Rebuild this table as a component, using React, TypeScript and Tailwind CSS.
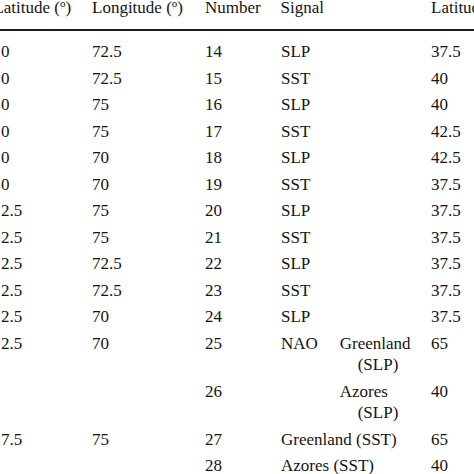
import React from "react";

type Row = {
  lat: string;
  lon: string;
  num: string;
  signal: React.ReactNode;
  lat2: string;
};

const Sub = ({ lead, text }: { lead?: string; text: string }) => (
  <div className="flex">
    <div className="w-[58.7px] shrink-0 whitespace-nowrap">{lead}</div>
    <div className="w-[80px] shrink-0 pl-[18px] indent-[-18px] whitespace-normal">{text}</div>
  </div>
);

const rows: Row[] = [
  { lat: "0", lon: "72.5", num: "14", signal: "SLP", lat2: "37.5" },
  { lat: "0", lon: "72.5", num: "15", signal: "SST", lat2: "40" },
  { lat: "0", lon: "75", num: "16", signal: "SLP", lat2: "40" },
  { lat: "0", lon: "75", num: "17", signal: "SST", lat2: "42.5" },
  { lat: "0", lon: "70", num: "18", signal: "SLP", lat2: "42.5" },
  { lat: "0", lon: "70", num: "19", signal: "SST", lat2: "37.5" },
  { lat: "2.5", lon: "75", num: "20", signal: "SLP", lat2: "37.5" },
  { lat: "2.5", lon: "75", num: "21", signal: "SST", lat2: "37.5" },
  { lat: "2.5", lon: "72.5", num: "22", signal: "SLP", lat2: "37.5" },
  { lat: "2.5", lon: "72.5", num: "23", signal: "SST", lat2: "37.5" },
  { lat: "2.5", lon: "70", num: "24", signal: "SLP", lat2: "37.5" },
  { lat: "2.5", lon: "70", num: "25", signal: <Sub lead="NAO" text="Greenland (SLP)" />, lat2: "65" },
  { lat: "", lon: "", num: "26", signal: <Sub text="Azores (SLP)" />, lat2: "40" },
  { lat: "7.5", lon: "75", num: "27", signal: "Greenland (SST)", lat2: "65" },
  { lat: "", lon: "", num: "28", signal: "Azores (SST)", lat2: "40" },
];

const Deg = () => (
  <>
    (<span className="relative top-[-6px] text-[11px]">o</span>)
  </>
);

export default function App() {
  return (
    <div className="w-[474px] h-[474px] overflow-hidden bg-white text-[#141414] font-['Liberation_Serif','Times_New_Roman',serif] text-[17px] leading-[21.5px]">
      <div className="mt-[-6px] w-[620px]">
        <div className="flex py-[2.5px] whitespace-nowrap">
          <div className="w-[92px] shrink-0">
            <span className="ml-[-6.6px]">
              Latitude <Deg />
            </span>
          </div>
          <div className="w-[113px] shrink-0">
            Longitude <Deg />
          </div>
          <div className="w-[75.5px] shrink-0">Number</div>
          <div className="w-[150.5px] shrink-0">Signal</div>
          <div className="shrink-0">
            Latitude <Deg />
          </div>
        </div>
        <div className="mt-[6px] h-[2.5px] bg-[#1c1c1c] w-[474px]" />
        <div className="mt-[7.5px]">
          {rows.map((r) => (
            <div key={r.num} className="flex py-[2.5px]">
              <div className="w-[92px] shrink-0 pl-[1px] whitespace-nowrap">{r.lat}</div>
              <div className="w-[113px] shrink-0 whitespace-nowrap">{r.lon}</div>
              <div className="w-[76px] shrink-0 whitespace-nowrap">{r.num}</div>
              <div className="w-[150px] shrink-0 whitespace-nowrap">{r.signal}</div>
              <div className="shrink-0 whitespace-nowrap">{r.lat2}</div>
            </div>
          ))}
        </div>
      </div>
    </div>
  );
}
